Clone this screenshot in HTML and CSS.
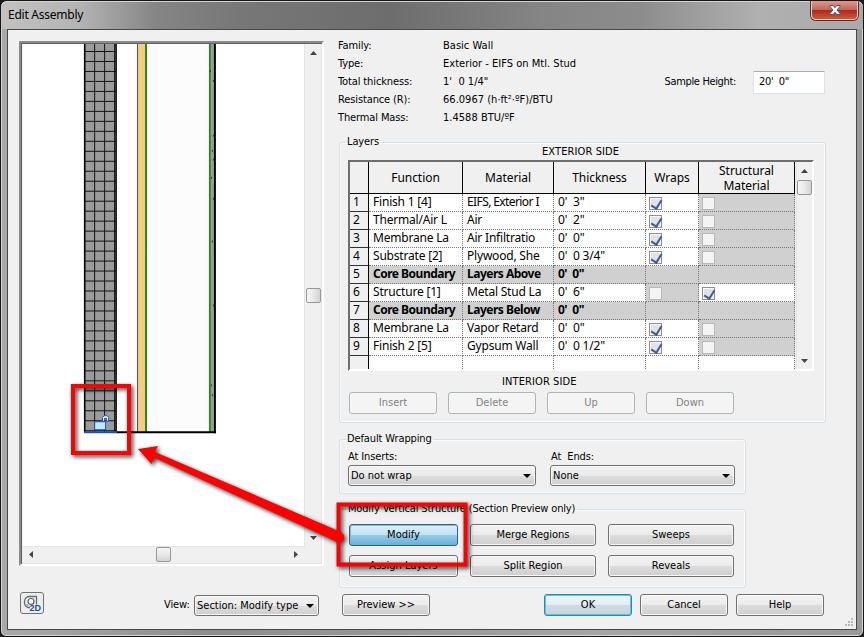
FILE: index.html
```html
<!DOCTYPE html>
<html lang="en">
<head>
    <meta charset="UTF-8">
    <meta name="viewport" content="width=device-width, initial-scale=1.0">
    <title>Edit Assembly</title>
    <link rel="stylesheet" href="styles.css">
</head>
<body>

<div class="window">
    <div class="titlebar">
        <h1>Edit Assembly</h1>
        <div class="close">
            <svg width="12" height="10" viewBox="0 0 12 10"><path d="M1 .5h3.200L6 2.700 7.800.500H11v1L8 5l3 3.500v1H7.800L6 7.300 4.200 9.500H1v-1L4 5 1 1.500z" fill="#fff" stroke="#4a5068"/></svg>
        </div>
    </div>

    <div class="client">
        <div class="main">
            <div class="preview">
                <svg class="canvas" width="282" height="503" viewBox="23 44 282 503">
                    <defs>
                        <pattern id="blocks" x="84" y="51" width="10" height="10" patternUnits="userSpaceOnUse">
                            <rect width="10" height="10" fill="#9b9b9b"/>
                            <path d="M0 .5h10M.5 0v10" stroke="#111"/>
                        </pattern>
                    </defs>
                    <rect x="84" y="44" width="32" height="389" fill="url(#blocks)"/>
                    <path d="M84.500 44v389" stroke="#000" stroke-width="1.500"/>
                    <path d="M116 44v389" stroke="#000" stroke-width="1.500"/>
                    <rect x="138" y="44" width="8" height="389" fill="#f6cd80"/>
                    <path d="M137.500 44v389" stroke="#5c4a36"/>
                    <rect x="147" y="44" width="62" height="389" fill="#fcfcfc"/>
                    <path d="M146 44v389M210 44v389" stroke="#1c8a22" stroke-width="2"/>
                    <rect x="211" y="44" width="3" height="389" fill="#9b9b9b"/>
                    <path d="M215 44v390" stroke="#000" stroke-width="2"/>
                    <path d="M210 71h1M213 81h1M213 136h1M212 151h1M213 160h1M211 178h1M213 199h1M212 242h1M213 306h1M211 386h1M212 396h1" stroke="#333" stroke-width="2"/>
                    <path d="M116 433h100" stroke="#000" stroke-width="2"/>
                    <path d="M84 433h33" stroke="#1c4fb8" stroke-width="2"/>
                    <rect x="94.500" y="422.500" width="11" height="8" fill="#b9ecf7" stroke="#1c4fb8"/>
                    <path d="M102.500 422v-4l1.500-1.500h3l1.500 1.500v4h-2v-3h-2v3z" fill="#fff" stroke="#1c4fb8"/>
                </svg>
                <div class="vscroll">
                    <svg class="up" width="7" height="4"><path d="M0 4l3.500-4L7 4z" fill="#444"/></svg>
                    <div class="thumb"></div>
                    <svg class="down" width="7" height="4"><path d="M0 0h7L3.500 4z" fill="#444"/></svg>
                </div>
                <div class="hscroll">
                    <svg width="4" height="7"><path d="M4 0v7L0 3.500z" fill="#444"/></svg>
                    <div class="thumb"></div>
                    <svg width="4" height="7"><path d="M0 0v7l4-3.500z" fill="#444"/></svg>
                </div>
            </div>

            <div class="settings">
                <div class="info">
                    <dl>
                        <dt>Family:</dt><dd>Basic Wall</dd>
                        <dt>Type:</dt><dd>Exterior - EIFS on Mtl. Stud</dd>
                        <dt>Total thickness:</dt><dd>1'&nbsp; 0 1/4"</dd>
                        <dt>Resistance (R):</dt><dd>66.0967 (h·ft²·ºF)/BTU</dd>
                        <dt>Thermal Mass:</dt><dd>1.4588 BTU/ºF</dd>
                    </dl>
                    <label class="sample">Sample Height: <span class="field">20'&nbsp; 0"</span></label>
                </div>

                <fieldset class="layers">
                    <legend>Layers</legend>
                    <div class="side">EXTERIOR SIDE</div>
                    <div class="grid">
                        <table>
                            <thead>
                                <tr><th class="num"></th><th class="fn">Function</th><th class="mat">Material</th><th class="thick">Thickness</th><th class="wraps">Wraps</th><th class="struct">Structural<br>Material</th></tr>
                            </thead>
                            <tbody>
                                <tr><th>1</th><td>Finish 1 [4]</td><td class="tight">EIFS, Exterior I</td><td>0'&nbsp; 3"</td><td><i class="check on"></i></td><td class="off"><i class="check"></i></td></tr>
                                <tr><th>2</th><td>Thermal/Air L</td><td>Air</td><td>0'&nbsp; 2"</td><td><i class="check on"></i></td><td class="off"><i class="check"></i></td></tr>
                                <tr><th>3</th><td>Membrane La</td><td>Air Infiltratio</td><td>0'&nbsp; 0"</td><td><i class="check on"></i></td><td class="off"><i class="check"></i></td></tr>
                                <tr><th>4</th><td>Substrate [2]</td><td>Plywood, She</td><td>0'&nbsp; 0 3/4"</td><td><i class="check on"></i></td><td class="off"><i class="check"></i></td></tr>
                                <tr class="core"><th>5</th><td>Core Boundary</td><td>Layers Above</td><td>0'&nbsp; 0"</td><td></td><td></td></tr>
                                <tr><th>6</th><td>Structure [1]</td><td>Metal Stud La</td><td>0'&nbsp; 6"</td><td class="off"><i class="check"></i></td><td><i class="check on"></i></td></tr>
                                <tr class="core"><th>7</th><td>Core Boundary</td><td>Layers Below</td><td>0'&nbsp; 0"</td><td></td><td></td></tr>
                                <tr><th>8</th><td>Membrane La</td><td>Vapor Retard</td><td>0'&nbsp; 0"</td><td><i class="check on"></i></td><td class="off"><i class="check"></i></td></tr>
                                <tr><th>9</th><td>Finish 2 [5]</td><td>Gypsum Wall</td><td>0'&nbsp; 0 1/2"</td><td><i class="check on"></i></td><td class="off"><i class="check"></i></td></tr>
                                <tr class="last"><th></th><td></td><td></td><td></td><td></td><td></td></tr>
                            </tbody>
                        </table>
                        <div class="vscroll">
                            <svg class="up" width="7" height="4"><path d="M0 4l3.500-4L7 4z" fill="#444"/></svg>
                            <div class="thumb"></div>
                            <svg class="down" width="7" height="4"><path d="M0 0h7L3.500 4z" fill="#444"/></svg>
                        </div>
                    </div>
                    <div class="side interior">INTERIOR SIDE</div>
                    <div class="buttons">
                        <button disabled>Insert</button>
                        <button disabled>Delete</button>
                        <button disabled>Up</button>
                        <button disabled>Down</button>
                    </div>
                </fieldset>

                <fieldset class="wrapping">
                    <legend>Default Wrapping</legend>
                    <div class="choice inserts"><span>At Inserts:</span><div class="combo">Do not wrap</div></div>
                    <div class="choice ends"><span>At&nbsp; Ends:</span><div class="combo">None</div></div>
                </fieldset>

                <fieldset class="vertical">
                    <legend>Modify Vertical Structure (Section Preview only)</legend>
                    <button class="active">Modify</button>
                    <button>Merge Regions</button>
                    <button>Sweeps</button>
                    <button>Assign Layers</button>
                    <button>Split Region</button>
                    <button>Reveals</button>
                </fieldset>
            </div>
        </div>

        <div class="footer">
            <div class="tool">
                <svg width="22" height="20" viewBox="0 0 22 20">
                    <path d="M9 14.500H7.500A5 5 0 0 1 3.500 10V8a5 5 0 0 1 5-4.500h7v8" fill="none" stroke="#666b80" stroke-width="1.300"/>
                    <circle cx="10" cy="8.500" r="3" fill="#fff" stroke="#555b70" stroke-width="1.200"/>
                    <path d="M5.500 11l2 2" stroke="#777"/>
                    <text x="8.500" y="18">2D</text>
                </svg>
            </div>
            <span class="view">View:</span>
            <div class="combo">Section: Modify type</div>
            <button class="show">Preview &gt;&gt;</button>
            <button class="ok">OK</button>
            <button>Cancel</button>
            <button>Help</button>
        </div>
        <svg class="grip" width="9" height="9"><path d="M6 1h2M3 4h2M6 4h2M0 7h2M3 7h2M6 7h2" stroke="#b8b8b8" stroke-width="2"/></svg>
    </div>

    <!-- red callouts over the dialog -->
    <svg class="callouts" width="864" height="637">
        <rect x="73" y="386" width="56" height="67"/>
        <rect x="338.500" y="504.500" width="127" height="60"/>
        <path d="M138 449l20-3-3 6 186 80q5 4 2 8-2 3-6 2L154 457.500l-2.500 6.500z"/>
    </svg>
</div>

</body>
</html>
```
FILE: styles.css
```css
* {
    box-sizing: border-box;
}

body {
    margin: 0;
    background: #1b1b1b;
    color: #000;
    font: 11px/14px "DejaVu Sans Condensed", "DejaVu Sans", sans-serif;
    font-stretch: condensed;
    letter-spacing: -0.12px;
}

.window {
    position: relative;
    width: 864px;
    height: 637px;
    padding: 0 6px;
    overflow: hidden;
    border: 1px solid #151515;
    border-radius: 7px 7px 6px 6px;
    background: linear-gradient(90deg, #a9a9a9, #8d8d8d 25%, #a5a5a5 70%, #999);
    box-shadow: inset 0 0 0 1px #d5d5d5;
}

.titlebar {
    display: flex;
    justify-content: space-between;
    height: 28px;
    margin: 0 -6px;
    padding-left: 7px;
    border-radius: 6px 6px 0 0;
    background: linear-gradient(90deg, #c2c2c2, #b4b4b4 9%, #858585 18%, #777 28%, #6d6d6d 45%, #858585 63%, #8c8c8c 74%, #b0b0b0 88%, #aaa);
    box-shadow: inset 0 1px #d5d5d5;
}

h1 {
    margin: 6px 0 0;
    font: 12px/16px "Noto Sans", sans-serif;
    letter-spacing: -0.25px;
}

.close {
    display: flex;
    align-items: center;
    justify-content: center;
    width: 47px;
    height: 19px;
    margin-right: 5px;
    border: 1px solid #f0c8c0;
    border-top: 0;
    border-radius: 0 0 5px 5px;
    background: linear-gradient(#d99a90, #c4665a 48%, #aa2c1b 52%, #cf5838);
    box-shadow: 0 0 0 1px #50302c;
}

.client {
    position: relative;
    height: 601px;
    padding: 11px 0 0 11px;
    border: 1px solid #484848;
    background: #f0f0f0;
}

.main {
    display: flex;
    height: 547px;
}

.preview {
    display: grid;
    grid-template: 502px 16px / 282px 16px;
    width: 305px;
    height: 525px;
    padding: 1px 0 0 2px;
    border: 2px solid #fff;
    border-top-color: #8a8a8a;
    border-left-color: #8a8a8a;
    background: #f0f0f0;
    box-shadow: inset 1px 1px #606060, inset -1px -1px #e3e3e3;
}

.canvas {
    height: 502px;
    background: #fff;
}

.vscroll,
.hscroll {
    display: flex;
    align-items: center;
    background: #f0f0f0;
}

.vscroll {
    flex-direction: column;
    border-left: 1px solid #e4e4e4;
}

.thumb {
    width: 15px;
    height: 15px;
    border: 1px solid #979797;
    border-radius: 2px;
    background: linear-gradient(90deg, #f5f5f5, #e8e8e8 50%, #d3d3d3);
}

.preview .canvas {
    overflow: hidden;
}

.preview .vscroll {
    margin-left: -1px;
    padding: 7px 0 6px;
}

.preview .vscroll .thumb {
    margin: 233px 0 233px;
}

.preview .hscroll {
    padding: 0 5px 0 6px;
    border-top: 1px solid #e4e4e4;
}

.preview .hscroll .thumb {
    margin: 0 123px 0 123px;
    background: linear-gradient(#f5f5f5, #e8e8e8 50%, #d3d3d3);
}

.settings {
    width: 488px;
    margin: -5px 0 0 14px;
}

.info {
    display: flex;
    align-items: center;
    justify-content: space-between;
    height: 90px;
    margin-top: 1px;
}

dl {
    display: grid;
    grid-template-columns: 105px auto;
    margin: 0;
    line-height: 18px;
}

dd {
    margin: 0;
    letter-spacing: 0.02px;
}

.sample {
    display: flex;
    align-items: center;
    gap: 17px;
    margin-right: 1px;
    letter-spacing: -0.35px;
}

.field {
    width: 72px;
    height: 23px;
    padding: 3px 5px;
    border: 1px solid #dce3ec;
    border-top-color: #ababb3;
    background: #fff;
}

fieldset {
    min-width: 0;
    margin: 0 0 0 1px;
    padding: 0 0 0 8px;
    border: 1px solid #d5dfe8;
    border-radius: 3px;
    box-shadow: inset 0 0 0 1px #fbfbfb;
}

legend {
    height: 14px;
    margin-left: -2px;
    padding: 0 2px 0 1px;
}

.layers {
    height: 288px;
    margin-top: 8px;
}

.side {
    height: 15px;
    margin-top: -4px;
    padding-left: 194px;
    letter-spacing: 0.1px;
}

.grid {
    display: flex;
    width: 466px;
    height: 211px;
    border: 2px solid #fff;
    border-top-color: #6e6e6e;
    border-left-color: #6e6e6e;
    font: 12px/16px "Noto Sans", sans-serif;
    letter-spacing: -0.2px;
    overflow: hidden;
}

table {
    flex: none;
    width: 445px;
    border-collapse: separate;
    border-spacing: 0;
    table-layout: fixed;
    background: #fff;
}

th,
td {
    height: 18px;
    padding: 0;
    overflow: hidden;
    white-space: nowrap;
    text-align: left;
    vertical-align: top;
}

thead th {
    height: 32px;
    border-right: 1px solid #000;
    border-bottom: 1px solid #000;
    background: #f0f0f0;
    font-weight: normal;
    letter-spacing: -0.05px;
    line-height: 15px;
    text-align: center;
    vertical-align: middle;
}

.num { width: 19px; }
.fn { width: 94px; }
.mat { width: 91px; }
.thick { width: 92px; }
.wraps { width: 53px; }
.struct { width: 96px; }

tbody th {
    padding-left: 3px;
    border-right: 1px solid #000;
    border-bottom: 1px solid #333;
    background: #f0f0f0;
    font-weight: normal;
}

td {
    padding-left: 4px;
    border-right: 1px dotted #777;
    border-bottom: 1px dotted #777;
}

.tight {
    letter-spacing: -0.6px;
}

.off,
.core td {
    background: #d0d0d0;
}

.core td {
    font-weight: bold;
    letter-spacing: -0.5px;
}

.last th,
.last td {
    height: 13px;
    border-bottom: 0;
}

.check {
    display: block;
    width: 13px;
    height: 13px;
    margin: 3px 0 0 -1px;
    border: 1px solid #b8b8b8;
    background: #f4f4f4;
}

.check.on {
    border-color: #8e8f8f;
    background: #dfe3e8;
    box-shadow: inset 0 0 0 1px #f8f8f8;
}

.check.on::after {
    content: "";
    display: block;
    width: 5px;
    height: 9px;
    margin: 0 0 0 3px;
    border: solid #3c5a9c;
    border-width: 0 2px 2px 0;
    transform: rotate(32deg);
}

.grid .vscroll {
    width: 16px;
    margin-left: 1px;
    padding: 7px 0 6px;
}

.grid .vscroll .thumb {
    margin-top: 7px;
}

.grid .vscroll .down {
    margin-top: auto;
}

.interior {
    height: 16px;
    margin-top: 4px;
    padding-left: 154px;
}

.buttons {
    display: flex;
    gap: 11px;
    margin: 1px 0 0 1px;
}

button {
    width: 88px;
    height: 22px;
    padding: 0;
    border: 1px solid #707070;
    border-radius: 3px;
    background: linear-gradient(#f3f3f3, #ebebeb 50%, #dcdcdc 51%, #cfcfcf);
    box-shadow: inset 0 0 0 1px #f8f8f8;
    color: #000;
    font: inherit;
    letter-spacing: 0;
}

button:disabled {
    border-color: #adb2b5;
    background: #f4f4f4;
    color: #838383;
}

.wrapping {
    display: flex;
    width: 407px;
    height: 62px;
    margin-top: 9px;
}

.choice {
    margin-top: 4px;
}

.choice .combo {
    margin-top: 1px;
}

.inserts {
    width: 188px;
}

.ends {
    width: 185px;
    margin-left: 14px;
}

.ends span {
    padding-left: 1px;
}

.combo {
    position: relative;
    height: 21px;
    padding: 3px 2px;
    border: 1px solid #707070;
    border-radius: 3px;
    background: linear-gradient(#f2f2f2, #ebebeb 50%, #ddd 51%, #cfcfcf);
    box-shadow: inset 0 0 0 1px #f8f8f8;
    letter-spacing: 0;
    white-space: nowrap;
}

.combo::after {
    content: "";
    position: absolute;
    top: 8px;
    right: 4px;
    border: 4px solid transparent;
    border-top-color: #000;
    border-bottom: 0;
}

.vertical {
    display: grid;
    grid-template: 22px 22px / 109px 126px 126px;
    gap: 9px 12px;
    width: 407px;
    height: 86px;
    margin-top: 8px;
    padding: 8px 0 0 9px;
}

.vertical legend {
    letter-spacing: -0.17px;
}

.vertical button {
    width: auto;
}

button.active {
    border-color: #2c628b;
    background: linear-gradient(#dff1fb, #c0e2f5 48%, #93cbea 52%, #6bb0d8);
    box-shadow: inset 1px 1px #9ab5c4;
}

.footer {
    display: flex;
    align-items: flex-start;
    gap: 8px;
    padding: 6px 0 0 1px;
}

.tool {
    width: 24px;
    height: 22px;
    margin-top: -2px;
    border: 1px solid #707070;
    border-radius: 3px;
    background: #ededed;
}

.tool svg {
    display: block;
}

.tool text {
    fill: #14509a;
    font: bold 9px "Liberation Sans", sans-serif;
    letter-spacing: 0;
}

.view {
    width: 26px;
    margin: 4px -4px 0 112px;
}

.footer .combo {
    width: 125px;
    margin-top: 1px;
    letter-spacing: 0;
}

.show {
    margin: 0 106px 0 15px;
}

.ok {
    border-color: #3c7fb1;
    background: linear-gradient(#eef5f9, #e2edf3 50%, #cddbe3 51%, #c5d4dd);
    box-shadow: inset 0 0 0 1px #48cdf5;
}

.grip {
    position: absolute;
    right: 2px;
    bottom: 2px;
}

.callouts {
    position: absolute;
    top: -1px;
    left: -1px;
    filter: drop-shadow(2px 2px 2px rgba(0, 0, 0, 0.75));
}

.callouts rect {
    fill: none;
    stroke: #f00;
    stroke-width: 4;
}

.callouts path {
    fill: #f00;
}
```
